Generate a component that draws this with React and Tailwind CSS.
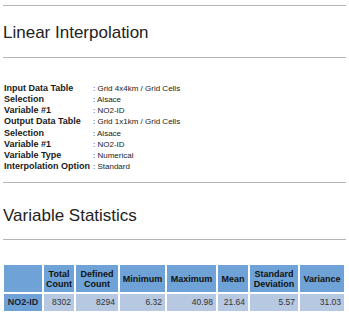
import React from "react";

const info = [
  ["Input Data Table", "Grid 4x4km / Grid Cells"],
  ["Selection", "Alsace"],
  ["Variable #1", "NO2-ID"],
  ["Output Data Table", "Grid 1x1km / Grid Cells"],
  ["Selection", "Alsace"],
  ["Variable #1", "NO2-ID"],
  ["Variable Type", "Numerical"],
  ["Interpolation Option", "Standard"],
];

const cols = [
  { label: ["Total", "Count"], w: "w-[30px]", value: "8302" },
  { label: ["Defined", "Count"], w: "w-[42px]", value: "8294" },
  { label: ["Minimum"], w: "w-[45px]", value: "6.32" },
  { label: ["Maximum"], w: "w-[49px]", value: "40.98" },
  { label: ["Mean"], w: "w-[30px]", value: "21.64" },
  { label: ["Standard", "Deviation"], w: "w-[48px]", value: "5.57" },
  { label: ["Variance"], w: "w-[44px]", value: "31.03" },
];

const Rule = () => <div className="mx-[3px] h-px bg-[#b4b4b4]" />;

const App = () => {
  return (
    <div className="w-[349px] h-[315px] overflow-hidden bg-white pt-[5px] font-['Liberation_Sans',Arial,sans-serif] text-[#1a1a1a]">
      <Rule />
      <div className="h-[51px] pt-[17px] pl-[3px]">
        <h1 className="text-[17px] leading-[20px] text-[#222]">Linear Interpolation</h1>
      </div>
      <Rule />

      {/* report parameters */}
      <div className="mt-[25px] mb-[10px] pl-[4px]">
        {info.map(([k, v], i) => (
          <div key={i} className="flex h-[11.14px] items-center">
            <span className="w-[89px] shrink-0 text-[9px] font-bold leading-[11px]">{k}</span>
            <span className="text-[8px] leading-[11px] text-[#222]">: {v}</span>
          </div>
        ))}
      </div>
      <Rule />

      <div className="h-[56px] pt-[23px] pl-[3px]">
        <h2 className="text-[17px] leading-[20px] text-[#222]">Variable Statistics</h2>
      </div>
      <Rule />

      <table className="mt-[23px] ml-[2px] w-[344px] table-fixed border-separate border-spacing-[2px]">
        <colgroup>
          <col className="w-[38px]" />
          {cols.map((c, i) => (
            <col key={i} className={c.w} />
          ))}
        </colgroup>
        <thead>
          <tr className="h-[27px]">
            <th className="bg-[#6fa2d6] p-0" />
            {cols.map((c, i) => (
              <th
                key={i}
                className="bg-[#6fa2d6] p-0 text-center align-middle text-[9px] font-bold leading-[10px] text-[#111]"
              >
                {c.label.map((l, j) => (
                  <div key={j}>{l}</div>
                ))}
              </th>
            ))}
          </tr>
        </thead>
        <tbody>
          <tr className="h-[17px]">
            <td className="bg-[#6fa2d6] p-0 text-center text-[9px] font-bold text-[#1a2333]">NO2-ID</td>
            {cols.map((c, i) => (
              <td key={i} className="bg-[#b6c8e2] p-0 pr-[3px] text-right text-[8.5px] text-[#333]">
                {c.value}
              </td>
            ))}
          </tr>
        </tbody>
      </table>
    </div>
  );
};

export default App;
